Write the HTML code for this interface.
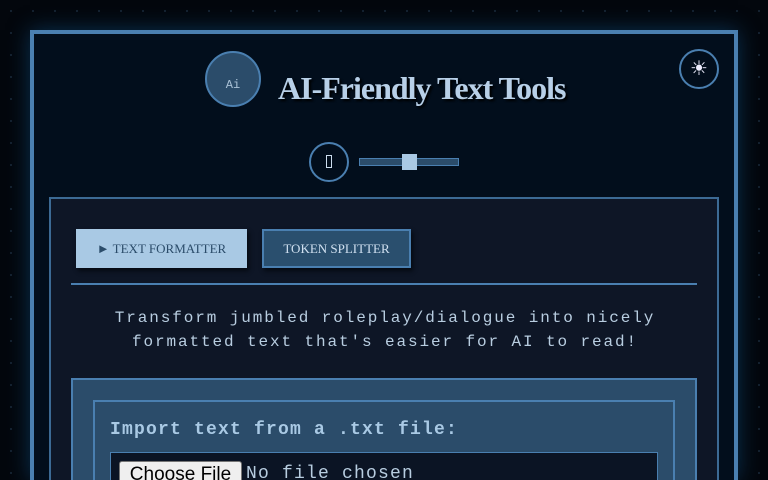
<!DOCTYPE html>
<html><head><meta charset="utf-8"><style>
*{box-sizing:border-box;margin:0;padding:0}
html,body{width:768px;height:480px;overflow:hidden}
body{background:#03070d;background-image:radial-gradient(#1a2a3a 1px,transparent 1px);background-size:22px 22px;position:relative;font-family:"Liberation Serif",serif}
.frame{position:absolute;left:30px;top:30px;width:708px;height:450px;border:4px solid #4a7fb0;border-bottom:none;background:#020e1c;box-shadow:0 0 20px #0a3050}
.abs{position:absolute}
.circ{border-radius:50%;border:2px solid #4a7fb0}
</style></head><body>
<div class="frame"></div>
<div class="abs circ" style="left:205px;top:51px;width:56px;height:56px;background:#2b4c6a;color:#a9c1d6;font:12px 'Liberation Mono',monospace;text-align:center;line-height:64px">Ai</div>
<div class="abs" style="left:278px;top:70px;font-weight:bold;font-size:32px;color:#b8d0e8;letter-spacing:-1px;text-shadow:2px 2px 2px #000">AI-Friendly Text Tools</div>
<div class="abs circ" style="left:679px;top:49px;width:40px;height:40px;color:#eef;font-size:20px;text-align:center;line-height:36px">☀</div>
<div class="abs circ" style="left:309px;top:142px;width:40px;height:40px"></div>
<div class="abs" style="left:326px;top:155px;width:6px;height:13px;border:1px solid #cde"></div>
<div class="abs" style="left:359px;top:158px;width:100px;height:8px;background:#2b4c6a;border:1px solid #4a7fb0"></div>
<div class="abs" style="left:402px;top:154px;width:15px;height:16px;background:#a9c9e4"></div>
<div class="abs" style="left:49px;top:197px;width:670px;height:283px;border:2px solid #3c6a94;border-bottom:none;background:#0e1626"></div>
<div class="abs" style="left:76px;top:229px;width:171px;height:39px;background:#a9c9e4;color:#2b4c6a;font-size:13px;text-align:center;line-height:39px;box-shadow:2px 3px 4px #050a12">► TEXT FORMATTER</div>
<div class="abs" style="left:262px;top:229px;width:149px;height:39px;background:#2a4f6e;border:2px solid #4a7fb0;color:#d0e0f0;font-size:13px;text-align:center;line-height:35px;box-shadow:2px 3px 4px #050a12">TOKEN SPLITTER</div>
<div class="abs" style="left:71px;top:283px;width:626px;height:2px;background:#4a7fb0"></div>
<div class="abs" style="left:60px;top:306px;width:650px;text-align:center;font:16px/24px 'Liberation Mono',monospace;letter-spacing:1.9px;color:#b8cde0">Transform jumbled roleplay/dialogue into nicely<br>formatted text that's easier for AI to read!</div>
<div class="abs" style="left:71px;top:378px;width:626px;height:102px;background:#2b4c6a;border:2px solid #4a7fb0;border-bottom:none"></div>
<div class="abs" style="left:93px;top:400px;width:582px;height:80px;border:2px solid #4a7fb0;border-bottom:none"></div>
<div class="abs" style="left:110px;top:420px;font:bold 18px 'Liberation Mono',monospace;letter-spacing:1.2px;color:#a9c9e4">Import text from a .txt file:</div>
<div class="abs" style="left:110px;top:452px;width:548px;height:28px;background:#0b1424;border:1px solid #4a7fb0;border-bottom:none"></div>
<div class="abs" style="left:119px;top:461px;width:123px;height:28px;background:#efefef;border:1px solid #767676;border-radius:3px;font:19px 'Liberation Sans',sans-serif;color:#000;text-align:center;line-height:26px">Choose File</div>
<div class="abs" style="left:246px;top:464px;font:18px 'Liberation Mono',monospace;letter-spacing:1.2px;color:#b8cde0">No file chosen</div>
</body></html>
